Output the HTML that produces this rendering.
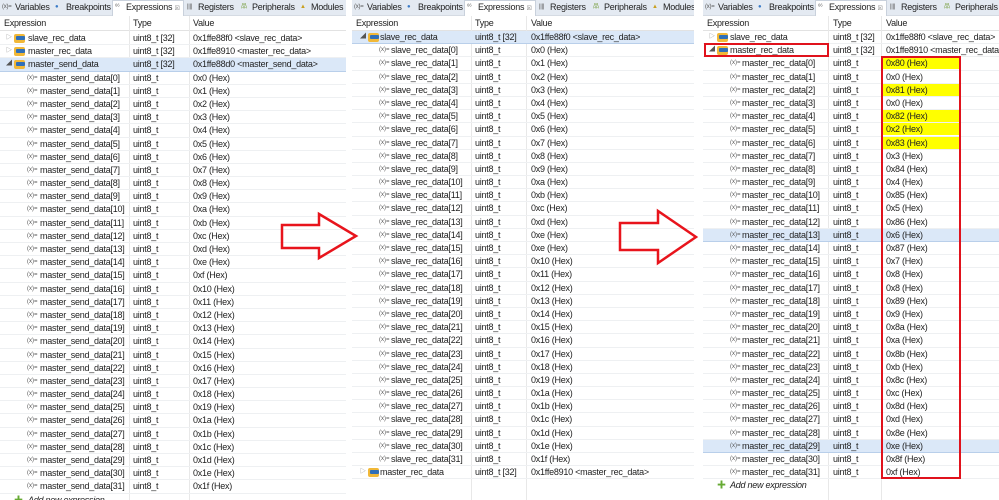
<!DOCTYPE html><html><head><meta charset="utf-8"><style>
*{margin:0;padding:0;box-sizing:border-box}
body{width:999px;height:500px;background:#fff;position:relative;overflow:hidden;font-family:"Liberation Sans","Noto Sans CJK JP",sans-serif;font-size:9px;letter-spacing:-0.25px;color:#222}
.p{position:absolute;top:0;height:500px;overflow:hidden;background:#fff}
.tabs{height:16px;background:#e4eaf2;position:relative;white-space:nowrap;border-bottom:1px solid #d5dbe3}
.tab{position:absolute;top:0;height:16px;line-height:15px;font-size:9px;color:#222}
.act{position:absolute;top:0;height:16px;background:#fff;border:1px solid #c9d1dc;border-bottom:none}
.ti{position:absolute;top:0;line-height:15px;font-size:6px;color:#555}
.hdr{height:15px;position:relative;border-bottom:1px solid #e2e2e2}
.hdr span{position:absolute;top:2px}
.r{height:13.2px;position:relative;border-bottom:1px solid #eef0f2;line-height:12px;white-space:nowrap}
.r span{position:absolute;top:0}
.sel{background:#dbe8f8;border-bottom:1px solid #b9cfea}
.vl{position:absolute;top:16px;bottom:0;width:1px;background:#e8e8e8}
.tri{position:absolute;top:0;font-size:6px;color:#888;font-style:normal}
.st{position:absolute;top:2px;width:11px;height:9px;background:#f1b838;border-radius:2px}
.st:after{content:"";position:absolute;left:2px;top:2px;width:9px;height:4px;background:#2f6fb8;border-radius:1px}
.r b.x{position:absolute;top:0;font-size:6px;color:#555;font-weight:normal;letter-spacing:0}
.y{background:#ffff00}
</style></head><body>

<!-- PANEL 1 -->
<div class="p" style="left:0;width:346px">
<div class="tabs">
<div class="act" style="left:112px;width:72px"></div>
<span class="ti" style="left:2px">(x)=</span><div class="tab" style="left:15px">Variables</div>
<span class="ti" style="left:55px;color:#3a7bc8">●</span><div class="tab" style="left:66px">Breakpoints</div>
<span class="ti" style="left:115px">⁶⁶</span><div class="tab" style="left:126px">Expressions <span style="font-size:6px;color:#888">☒</span></div>
<span class="ti" style="left:187px">||||</span><div class="tab" style="left:198px">Registers</div>
<span class="ti" style="left:241px;color:#7aa042">品</span><div class="tab" style="left:252px">Peripherals</div>
<span class="ti" style="left:300px;color:#c9a020">▲</span><div class="tab" style="left:311px">Modules</div>
</div>
<div class="hdr"><span style="left:4px">Expression</span><span style="left:133px">Type</span><span style="left:193px">Value</span></div>
<div class="vl" style="left:129px"></div><div class="vl" style="left:189px"></div>
<div style="height:1px"></div>
<div class="r"><i class="tri" style="left:6px">▷</i><i class="st" style="left:14px"></i><span style="left:28px">slave_rec_data</span><span style="left:133px">uint8_t [32]</span><span style="left:193px">0x1ffe88f0 &lt;slave_rec_data&gt;</span></div>
<div class="r"><i class="tri" style="left:6px">▷</i><i class="st" style="left:14px"></i><span style="left:28px">master_rec_data</span><span style="left:133px">uint8_t [32]</span><span style="left:193px">0x1ffe8910 &lt;master_rec_data&gt;</span></div>
<div class="r sel"><i class="tri" style="left:6px;color:#555">◢</i><i class="st" style="left:14px"></i><span style="left:28px">master_send_data</span><span style="left:133px">uint8_t [32]</span><span style="left:193px">0x1ffe88d0 &lt;master_send_data&gt;</span></div>
<div class="r"><b class="x" style="left:27px">(x)=</b><span style="left:40px">master_send_data[0]</span><span style="left:133px">uint8_t</span><span style="left:193px">0x0 (Hex)</span></div>
<div class="r"><b class="x" style="left:27px">(x)=</b><span style="left:40px">master_send_data[1]</span><span style="left:133px">uint8_t</span><span style="left:193px">0x1 (Hex)</span></div>
<div class="r"><b class="x" style="left:27px">(x)=</b><span style="left:40px">master_send_data[2]</span><span style="left:133px">uint8_t</span><span style="left:193px">0x2 (Hex)</span></div>
<div class="r"><b class="x" style="left:27px">(x)=</b><span style="left:40px">master_send_data[3]</span><span style="left:133px">uint8_t</span><span style="left:193px">0x3 (Hex)</span></div>
<div class="r"><b class="x" style="left:27px">(x)=</b><span style="left:40px">master_send_data[4]</span><span style="left:133px">uint8_t</span><span style="left:193px">0x4 (Hex)</span></div>
<div class="r"><b class="x" style="left:27px">(x)=</b><span style="left:40px">master_send_data[5]</span><span style="left:133px">uint8_t</span><span style="left:193px">0x5 (Hex)</span></div>
<div class="r"><b class="x" style="left:27px">(x)=</b><span style="left:40px">master_send_data[6]</span><span style="left:133px">uint8_t</span><span style="left:193px">0x6 (Hex)</span></div>
<div class="r"><b class="x" style="left:27px">(x)=</b><span style="left:40px">master_send_data[7]</span><span style="left:133px">uint8_t</span><span style="left:193px">0x7 (Hex)</span></div>
<div class="r"><b class="x" style="left:27px">(x)=</b><span style="left:40px">master_send_data[8]</span><span style="left:133px">uint8_t</span><span style="left:193px">0x8 (Hex)</span></div>
<div class="r"><b class="x" style="left:27px">(x)=</b><span style="left:40px">master_send_data[9]</span><span style="left:133px">uint8_t</span><span style="left:193px">0x9 (Hex)</span></div>
<div class="r"><b class="x" style="left:27px">(x)=</b><span style="left:40px">master_send_data[10]</span><span style="left:133px">uint8_t</span><span style="left:193px">0xa (Hex)</span></div>
<div class="r"><b class="x" style="left:27px">(x)=</b><span style="left:40px">master_send_data[11]</span><span style="left:133px">uint8_t</span><span style="left:193px">0xb (Hex)</span></div>
<div class="r"><b class="x" style="left:27px">(x)=</b><span style="left:40px">master_send_data[12]</span><span style="left:133px">uint8_t</span><span style="left:193px">0xc (Hex)</span></div>
<div class="r"><b class="x" style="left:27px">(x)=</b><span style="left:40px">master_send_data[13]</span><span style="left:133px">uint8_t</span><span style="left:193px">0xd (Hex)</span></div>
<div class="r"><b class="x" style="left:27px">(x)=</b><span style="left:40px">master_send_data[14]</span><span style="left:133px">uint8_t</span><span style="left:193px">0xe (Hex)</span></div>
<div class="r"><b class="x" style="left:27px">(x)=</b><span style="left:40px">master_send_data[15]</span><span style="left:133px">uint8_t</span><span style="left:193px">0xf (Hex)</span></div>
<div class="r"><b class="x" style="left:27px">(x)=</b><span style="left:40px">master_send_data[16]</span><span style="left:133px">uint8_t</span><span style="left:193px">0x10 (Hex)</span></div>
<div class="r"><b class="x" style="left:27px">(x)=</b><span style="left:40px">master_send_data[17]</span><span style="left:133px">uint8_t</span><span style="left:193px">0x11 (Hex)</span></div>
<div class="r"><b class="x" style="left:27px">(x)=</b><span style="left:40px">master_send_data[18]</span><span style="left:133px">uint8_t</span><span style="left:193px">0x12 (Hex)</span></div>
<div class="r"><b class="x" style="left:27px">(x)=</b><span style="left:40px">master_send_data[19]</span><span style="left:133px">uint8_t</span><span style="left:193px">0x13 (Hex)</span></div>
<div class="r"><b class="x" style="left:27px">(x)=</b><span style="left:40px">master_send_data[20]</span><span style="left:133px">uint8_t</span><span style="left:193px">0x14 (Hex)</span></div>
<div class="r"><b class="x" style="left:27px">(x)=</b><span style="left:40px">master_send_data[21]</span><span style="left:133px">uint8_t</span><span style="left:193px">0x15 (Hex)</span></div>
<div class="r"><b class="x" style="left:27px">(x)=</b><span style="left:40px">master_send_data[22]</span><span style="left:133px">uint8_t</span><span style="left:193px">0x16 (Hex)</span></div>
<div class="r"><b class="x" style="left:27px">(x)=</b><span style="left:40px">master_send_data[23]</span><span style="left:133px">uint8_t</span><span style="left:193px">0x17 (Hex)</span></div>
<div class="r"><b class="x" style="left:27px">(x)=</b><span style="left:40px">master_send_data[24]</span><span style="left:133px">uint8_t</span><span style="left:193px">0x18 (Hex)</span></div>
<div class="r"><b class="x" style="left:27px">(x)=</b><span style="left:40px">master_send_data[25]</span><span style="left:133px">uint8_t</span><span style="left:193px">0x19 (Hex)</span></div>
<div class="r"><b class="x" style="left:27px">(x)=</b><span style="left:40px">master_send_data[26]</span><span style="left:133px">uint8_t</span><span style="left:193px">0x1a (Hex)</span></div>
<div class="r"><b class="x" style="left:27px">(x)=</b><span style="left:40px">master_send_data[27]</span><span style="left:133px">uint8_t</span><span style="left:193px">0x1b (Hex)</span></div>
<div class="r"><b class="x" style="left:27px">(x)=</b><span style="left:40px">master_send_data[28]</span><span style="left:133px">uint8_t</span><span style="left:193px">0x1c (Hex)</span></div>
<div class="r"><b class="x" style="left:27px">(x)=</b><span style="left:40px">master_send_data[29]</span><span style="left:133px">uint8_t</span><span style="left:193px">0x1d (Hex)</span></div>
<div class="r"><b class="x" style="left:27px">(x)=</b><span style="left:40px">master_send_data[30]</span><span style="left:133px">uint8_t</span><span style="left:193px">0x1e (Hex)</span></div>
<div class="r"><b class="x" style="left:27px">(x)=</b><span style="left:40px">master_send_data[31]</span><span style="left:133px">uint8_t</span><span style="left:193px">0x1f (Hex)</span></div>
<div class="r" style="border:none"><span style="left:14px;color:#6a3;font-weight:bold">✚</span><span style="left:28px;font-style:italic">Add new expression</span></div>
</div>

<!-- PANEL 2 -->
<div class="p" style="left:352px;width:342px">
<div class="tabs">
<div class="act" style="left:112px;width:72px"></div>
<span class="ti" style="left:2px">(x)=</span><div class="tab" style="left:15px">Variables</div>
<span class="ti" style="left:55px;color:#3a7bc8">●</span><div class="tab" style="left:66px">Breakpoints</div>
<span class="ti" style="left:115px">⁶⁶</span><div class="tab" style="left:126px">Expressions <span style="font-size:6px;color:#888">☒</span></div>
<span class="ti" style="left:187px">||||</span><div class="tab" style="left:198px">Registers</div>
<span class="ti" style="left:241px;color:#7aa042">品</span><div class="tab" style="left:252px">Peripherals</div>
<span class="ti" style="left:300px;color:#c9a020">▲</span><div class="tab" style="left:311px">Modules</div>
</div>
<div class="hdr"><span style="left:4px">Expression</span><span style="left:123px">Type</span><span style="left:179px">Value</span></div>
<div class="vl" style="left:119px"></div><div class="vl" style="left:174px"></div>
<div class="r sel"><i class="tri" style="left:8px;color:#555">◢</i><i class="st" style="left:16px"></i><span style="left:28px">slave_rec_data</span><span style="left:123px">uint8_t [32]</span><span style="left:179px">0x1ffe88f0 &lt;slave_rec_data&gt;</span></div>
<div class="r"><b class="x" style="left:27px">(x)=</b><span style="left:39px">slave_rec_data[0]</span><span style="left:123px">uint8_t</span><span style="left:179px">0x0 (Hex)</span></div>
<div class="r"><b class="x" style="left:27px">(x)=</b><span style="left:39px">slave_rec_data[1]</span><span style="left:123px">uint8_t</span><span style="left:179px">0x1 (Hex)</span></div>
<div class="r"><b class="x" style="left:27px">(x)=</b><span style="left:39px">slave_rec_data[2]</span><span style="left:123px">uint8_t</span><span style="left:179px">0x2 (Hex)</span></div>
<div class="r"><b class="x" style="left:27px">(x)=</b><span style="left:39px">slave_rec_data[3]</span><span style="left:123px">uint8_t</span><span style="left:179px">0x3 (Hex)</span></div>
<div class="r"><b class="x" style="left:27px">(x)=</b><span style="left:39px">slave_rec_data[4]</span><span style="left:123px">uint8_t</span><span style="left:179px">0x4 (Hex)</span></div>
<div class="r"><b class="x" style="left:27px">(x)=</b><span style="left:39px">slave_rec_data[5]</span><span style="left:123px">uint8_t</span><span style="left:179px">0x5 (Hex)</span></div>
<div class="r"><b class="x" style="left:27px">(x)=</b><span style="left:39px">slave_rec_data[6]</span><span style="left:123px">uint8_t</span><span style="left:179px">0x6 (Hex)</span></div>
<div class="r"><b class="x" style="left:27px">(x)=</b><span style="left:39px">slave_rec_data[7]</span><span style="left:123px">uint8_t</span><span style="left:179px">0x7 (Hex)</span></div>
<div class="r"><b class="x" style="left:27px">(x)=</b><span style="left:39px">slave_rec_data[8]</span><span style="left:123px">uint8_t</span><span style="left:179px">0x8 (Hex)</span></div>
<div class="r"><b class="x" style="left:27px">(x)=</b><span style="left:39px">slave_rec_data[9]</span><span style="left:123px">uint8_t</span><span style="left:179px">0x9 (Hex)</span></div>
<div class="r"><b class="x" style="left:27px">(x)=</b><span style="left:39px">slave_rec_data[10]</span><span style="left:123px">uint8_t</span><span style="left:179px">0xa (Hex)</span></div>
<div class="r"><b class="x" style="left:27px">(x)=</b><span style="left:39px">slave_rec_data[11]</span><span style="left:123px">uint8_t</span><span style="left:179px">0xb (Hex)</span></div>
<div class="r"><b class="x" style="left:27px">(x)=</b><span style="left:39px">slave_rec_data[12]</span><span style="left:123px">uint8_t</span><span style="left:179px">0xc (Hex)</span></div>
<div class="r"><b class="x" style="left:27px">(x)=</b><span style="left:39px">slave_rec_data[13]</span><span style="left:123px">uint8_t</span><span style="left:179px">0xd (Hex)</span></div>
<div class="r"><b class="x" style="left:27px">(x)=</b><span style="left:39px">slave_rec_data[14]</span><span style="left:123px">uint8_t</span><span style="left:179px">0xe (Hex)</span></div>
<div class="r"><b class="x" style="left:27px">(x)=</b><span style="left:39px">slave_rec_data[15]</span><span style="left:123px">uint8_t</span><span style="left:179px">0xe (Hex)</span></div>
<div class="r"><b class="x" style="left:27px">(x)=</b><span style="left:39px">slave_rec_data[16]</span><span style="left:123px">uint8_t</span><span style="left:179px">0x10 (Hex)</span></div>
<div class="r"><b class="x" style="left:27px">(x)=</b><span style="left:39px">slave_rec_data[17]</span><span style="left:123px">uint8_t</span><span style="left:179px">0x11 (Hex)</span></div>
<div class="r"><b class="x" style="left:27px">(x)=</b><span style="left:39px">slave_rec_data[18]</span><span style="left:123px">uint8_t</span><span style="left:179px">0x12 (Hex)</span></div>
<div class="r"><b class="x" style="left:27px">(x)=</b><span style="left:39px">slave_rec_data[19]</span><span style="left:123px">uint8_t</span><span style="left:179px">0x13 (Hex)</span></div>
<div class="r"><b class="x" style="left:27px">(x)=</b><span style="left:39px">slave_rec_data[20]</span><span style="left:123px">uint8_t</span><span style="left:179px">0x14 (Hex)</span></div>
<div class="r"><b class="x" style="left:27px">(x)=</b><span style="left:39px">slave_rec_data[21]</span><span style="left:123px">uint8_t</span><span style="left:179px">0x15 (Hex)</span></div>
<div class="r"><b class="x" style="left:27px">(x)=</b><span style="left:39px">slave_rec_data[22]</span><span style="left:123px">uint8_t</span><span style="left:179px">0x16 (Hex)</span></div>
<div class="r"><b class="x" style="left:27px">(x)=</b><span style="left:39px">slave_rec_data[23]</span><span style="left:123px">uint8_t</span><span style="left:179px">0x17 (Hex)</span></div>
<div class="r"><b class="x" style="left:27px">(x)=</b><span style="left:39px">slave_rec_data[24]</span><span style="left:123px">uint8_t</span><span style="left:179px">0x18 (Hex)</span></div>
<div class="r"><b class="x" style="left:27px">(x)=</b><span style="left:39px">slave_rec_data[25]</span><span style="left:123px">uint8_t</span><span style="left:179px">0x19 (Hex)</span></div>
<div class="r"><b class="x" style="left:27px">(x)=</b><span style="left:39px">slave_rec_data[26]</span><span style="left:123px">uint8_t</span><span style="left:179px">0x1a (Hex)</span></div>
<div class="r"><b class="x" style="left:27px">(x)=</b><span style="left:39px">slave_rec_data[27]</span><span style="left:123px">uint8_t</span><span style="left:179px">0x1b (Hex)</span></div>
<div class="r"><b class="x" style="left:27px">(x)=</b><span style="left:39px">slave_rec_data[28]</span><span style="left:123px">uint8_t</span><span style="left:179px">0x1c (Hex)</span></div>
<div class="r"><b class="x" style="left:27px">(x)=</b><span style="left:39px">slave_rec_data[29]</span><span style="left:123px">uint8_t</span><span style="left:179px">0x1d (Hex)</span></div>
<div class="r"><b class="x" style="left:27px">(x)=</b><span style="left:39px">slave_rec_data[30]</span><span style="left:123px">uint8_t</span><span style="left:179px">0x1e (Hex)</span></div>
<div class="r"><b class="x" style="left:27px">(x)=</b><span style="left:39px">slave_rec_data[31]</span><span style="left:123px">uint8_t</span><span style="left:179px">0x1f (Hex)</span></div>
<div class="r"><i class="tri" style="left:8px">▷</i><i class="st" style="left:16px"></i><span style="left:28px">master_rec_data</span><span style="left:123px">uint8_t [32]</span><span style="left:179px">0x1ffe8910 &lt;master_rec_data&gt;</span></div>
</div>

<!-- PANEL 3 -->
<div class="p" style="left:703px;width:296px">
<div class="tabs">
<div class="act" style="left:112px;width:72px"></div>
<span class="ti" style="left:2px">(x)=</span><div class="tab" style="left:15px">Variables</div>
<span class="ti" style="left:55px;color:#3a7bc8">●</span><div class="tab" style="left:66px">Breakpoints</div>
<span class="ti" style="left:115px">⁶⁶</span><div class="tab" style="left:126px">Expressions <span style="font-size:6px;color:#888">☒</span></div>
<span class="ti" style="left:187px">||||</span><div class="tab" style="left:198px">Registers</div>
<span class="ti" style="left:241px;color:#7aa042">品</span><div class="tab" style="left:252px">Peripherals</div>
</div>
<div class="hdr"><span style="left:4px">Expression</span><span style="left:130px">Type</span><span style="left:183px">Value</span></div>
<div class="vl" style="left:125px"></div><div class="vl" style="left:178px"></div>
<div class="r"><i class="tri" style="left:6px">▷</i><i class="st" style="left:14px"></i><span style="left:27px">slave_rec_data</span><span style="left:130px">uint8_t [32]</span><span style="left:183px">0x1ffe88f0 &lt;slave_rec_data&gt;</span></div>
<div class="r"><i class="tri" style="left:6px;color:#555">◢</i><i class="st" style="left:14px"></i><span style="left:27px">master_rec_data</span><span style="left:130px">uint8_t [32]</span><span style="left:183px">0x1ffe8910 &lt;master_rec_data&gt;</span></div>
<div class="r"><b class="x" style="left:27px">(x)=</b><span style="left:39px">master_rec_data[0]</span><span style="left:130px">uint8_t</span><span class="y" style="left:180px;width:76px;padding-left:3px">0x80 (Hex)</span></div>
<div class="r"><b class="x" style="left:27px">(x)=</b><span style="left:39px">master_rec_data[1]</span><span style="left:130px">uint8_t</span><span style="left:183px">0x0 (Hex)</span></div>
<div class="r"><b class="x" style="left:27px">(x)=</b><span style="left:39px">master_rec_data[2]</span><span style="left:130px">uint8_t</span><span class="y" style="left:180px;width:76px;padding-left:3px">0x81 (Hex)</span></div>
<div class="r"><b class="x" style="left:27px">(x)=</b><span style="left:39px">master_rec_data[3]</span><span style="left:130px">uint8_t</span><span style="left:183px">0x0 (Hex)</span></div>
<div class="r"><b class="x" style="left:27px">(x)=</b><span style="left:39px">master_rec_data[4]</span><span style="left:130px">uint8_t</span><span class="y" style="left:180px;width:76px;padding-left:3px">0x82 (Hex)</span></div>
<div class="r"><b class="x" style="left:27px">(x)=</b><span style="left:39px">master_rec_data[5]</span><span style="left:130px">uint8_t</span><span class="y" style="left:180px;width:76px;padding-left:3px">0x2 (Hex)</span></div>
<div class="r"><b class="x" style="left:27px">(x)=</b><span style="left:39px">master_rec_data[6]</span><span style="left:130px">uint8_t</span><span class="y" style="left:180px;width:76px;padding-left:3px">0x83 (Hex)</span></div>
<div class="r"><b class="x" style="left:27px">(x)=</b><span style="left:39px">master_rec_data[7]</span><span style="left:130px">uint8_t</span><span style="left:183px">0x3 (Hex)</span></div>
<div class="r"><b class="x" style="left:27px">(x)=</b><span style="left:39px">master_rec_data[8]</span><span style="left:130px">uint8_t</span><span style="left:183px">0x84 (Hex)</span></div>
<div class="r"><b class="x" style="left:27px">(x)=</b><span style="left:39px">master_rec_data[9]</span><span style="left:130px">uint8_t</span><span style="left:183px">0x4 (Hex)</span></div>
<div class="r"><b class="x" style="left:27px">(x)=</b><span style="left:39px">master_rec_data[10]</span><span style="left:130px">uint8_t</span><span style="left:183px">0x85 (Hex)</span></div>
<div class="r"><b class="x" style="left:27px">(x)=</b><span style="left:39px">master_rec_data[11]</span><span style="left:130px">uint8_t</span><span style="left:183px">0x5 (Hex)</span></div>
<div class="r"><b class="x" style="left:27px">(x)=</b><span style="left:39px">master_rec_data[12]</span><span style="left:130px">uint8_t</span><span style="left:183px">0x86 (Hex)</span></div>
<div class="r sel"><b class="x" style="left:27px">(x)=</b><span style="left:39px">master_rec_data[13]</span><span style="left:130px">uint8_t</span><span style="left:183px">0x6 (Hex)</span></div>
<div class="r"><b class="x" style="left:27px">(x)=</b><span style="left:39px">master_rec_data[14]</span><span style="left:130px">uint8_t</span><span style="left:183px">0x87 (Hex)</span></div>
<div class="r"><b class="x" style="left:27px">(x)=</b><span style="left:39px">master_rec_data[15]</span><span style="left:130px">uint8_t</span><span style="left:183px">0x7 (Hex)</span></div>
<div class="r"><b class="x" style="left:27px">(x)=</b><span style="left:39px">master_rec_data[16]</span><span style="left:130px">uint8_t</span><span style="left:183px">0x8 (Hex)</span></div>
<div class="r"><b class="x" style="left:27px">(x)=</b><span style="left:39px">master_rec_data[17]</span><span style="left:130px">uint8_t</span><span style="left:183px">0x8 (Hex)</span></div>
<div class="r"><b class="x" style="left:27px">(x)=</b><span style="left:39px">master_rec_data[18]</span><span style="left:130px">uint8_t</span><span style="left:183px">0x89 (Hex)</span></div>
<div class="r"><b class="x" style="left:27px">(x)=</b><span style="left:39px">master_rec_data[19]</span><span style="left:130px">uint8_t</span><span style="left:183px">0x9 (Hex)</span></div>
<div class="r"><b class="x" style="left:27px">(x)=</b><span style="left:39px">master_rec_data[20]</span><span style="left:130px">uint8_t</span><span style="left:183px">0x8a (Hex)</span></div>
<div class="r"><b class="x" style="left:27px">(x)=</b><span style="left:39px">master_rec_data[21]</span><span style="left:130px">uint8_t</span><span style="left:183px">0xa (Hex)</span></div>
<div class="r"><b class="x" style="left:27px">(x)=</b><span style="left:39px">master_rec_data[22]</span><span style="left:130px">uint8_t</span><span style="left:183px">0x8b (Hex)</span></div>
<div class="r"><b class="x" style="left:27px">(x)=</b><span style="left:39px">master_rec_data[23]</span><span style="left:130px">uint8_t</span><span style="left:183px">0xb (Hex)</span></div>
<div class="r"><b class="x" style="left:27px">(x)=</b><span style="left:39px">master_rec_data[24]</span><span style="left:130px">uint8_t</span><span style="left:183px">0x8c (Hex)</span></div>
<div class="r"><b class="x" style="left:27px">(x)=</b><span style="left:39px">master_rec_data[25]</span><span style="left:130px">uint8_t</span><span style="left:183px">0xc (Hex)</span></div>
<div class="r"><b class="x" style="left:27px">(x)=</b><span style="left:39px">master_rec_data[26]</span><span style="left:130px">uint8_t</span><span style="left:183px">0x8d (Hex)</span></div>
<div class="r"><b class="x" style="left:27px">(x)=</b><span style="left:39px">master_rec_data[27]</span><span style="left:130px">uint8_t</span><span style="left:183px">0xd (Hex)</span></div>
<div class="r"><b class="x" style="left:27px">(x)=</b><span style="left:39px">master_rec_data[28]</span><span style="left:130px">uint8_t</span><span style="left:183px">0x8e (Hex)</span></div>
<div class="r sel"><b class="x" style="left:27px">(x)=</b><span style="left:39px">master_rec_data[29]</span><span style="left:130px">uint8_t</span><span style="left:183px">0xe (Hex)</span></div>
<div class="r"><b class="x" style="left:27px">(x)=</b><span style="left:39px">master_rec_data[30]</span><span style="left:130px">uint8_t</span><span style="left:183px">0x8f (Hex)</span></div>
<div class="r"><b class="x" style="left:27px">(x)=</b><span style="left:39px">master_rec_data[31]</span><span style="left:130px">uint8_t</span><span style="left:183px">0xf (Hex)</span></div>
<div class="r" style="border:none"><span style="left:14px;color:#6a3;font-weight:bold">✚</span><span style="left:27px;font-style:italic">Add new expression</span></div>
<div style="position:absolute;left:1px;top:43px;width:125px;height:14px;border:2px solid #e0121c"></div>
<div style="position:absolute;left:178px;top:56px;width:80px;height:423px;border:2px solid #e0121c"></div>
</div>

<svg style="position:absolute;left:0;top:0" width="999" height="500">
<polygon points="282,225 319,225 319,214 356,236 319,258 319,248 282,248" fill="none" stroke="#e8141c" stroke-width="2.5" stroke-linejoin="miter"/>
<polygon points="620,223 658,223 658,211 696,237 658,263 658,250 620,250" fill="none" stroke="#e8141c" stroke-width="2.5" stroke-linejoin="miter"/>
</svg>
</body></html>
